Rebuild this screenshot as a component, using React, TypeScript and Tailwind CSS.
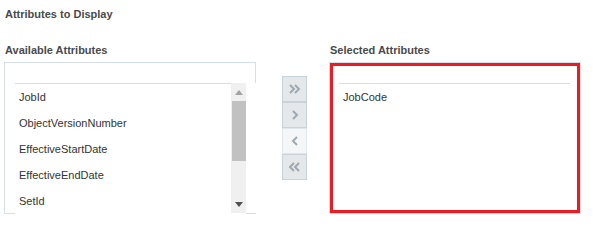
const available = [
  "JobId",
  "ObjectVersionNumber",
  "EffectiveStartDate",
  "EffectiveEndDate",
  "SetId",
];

function Chevron({ dir, double }: { dir: "left" | "right"; double?: boolean }) {
  const pts = (x: number) =>
    dir === "right" ? `${x},3 ${x + 4},7 ${x},11` : `${x + 4},3 ${x},7 ${x + 4},11`;
  return (
    <svg width="14" height="14" viewBox="0 0 14 14" fill="none" stroke="#9ea7b0" strokeWidth="1.9">
      {double ? (
        <>
          <polyline points={pts(2)} />
          <polyline points={pts(7)} />
        </>
      ) : (
        <polyline points={pts(5)} />
      )}
    </svg>
  );
}

function MoveButton({ children, light }: { children: React.ReactNode; light?: boolean }) {
  return (
    <button
      className={
        light
          ? "flex h-[26px] w-[25px] items-center justify-center border border-[#e1e6ea] bg-[#f4f6f7]"
          : "flex h-[26px] w-[25px] items-center justify-center border border-[#c9d2d9] bg-[#e4e8eb]"
      }
    >
      {children}
    </button>
  );
}

export default function App() {
  return (
    <div
      className="h-[226px] w-[600px] bg-white pt-[7px] text-[11px] text-[#333]"
      style={{ fontFamily: '"Liberation Sans", Arial, sans-serif' }}
    >
      <div className="pl-[5px] font-bold leading-[14px] text-[#4a4a4a]">Attributes to Display</div>

      <div className="mt-[22px] flex pl-[4px]">
        {/* available */}
        <div className="w-[252px]">
          <div className="pl-[1px] font-bold leading-[14px] text-[#4a4a4a]">Available Attributes</div>
          <div className="mt-[5px] flex flex-col border-t border-l border-b border-[#d6dfe6]">
            <div className="h-[20px] border-r border-[#d6dfe6]" />
            <div className="relative z-10 -mb-px ml-[10px] flex h-[131px] w-[231px] bg-white">
              <div className="flex-1 overflow-hidden border-t border-[#d6dfe6]">
                {available.map((a) => (
                  <div key={a} className="h-[26px] pl-[4px] leading-[26px]">
                    {a}
                  </div>
                ))}
              </div>
              <div className="flex h-[130px] w-[15px] flex-col items-center bg-[#f0f0f0]">
                <div className="flex h-[18px] items-center">
                  <svg width="8" height="5" viewBox="0 0 8 5">
                    <polygon points="0,5 4,0 8,5" fill="#a3a3a3" />
                  </svg>
                </div>
                <div className="ml-px h-[60px] w-[14px] bg-[#c1c1c1]" />
                <div className="flex-1" />
                <div className="flex h-[18px] items-center">
                  <svg width="8" height="5" viewBox="0 0 8 5">
                    <polygon points="0,0 8,0 4,5" fill="#505050" />
                  </svg>
                </div>
              </div>
            </div>
          </div>
        </div>

        {/* buttons */}
        <div className="ml-[26px] mt-[33px] flex flex-col">
          <MoveButton>
            <Chevron dir="right" double />
          </MoveButton>
          <MoveButton>
            <Chevron dir="right" />
          </MoveButton>
          <MoveButton light>
            <Chevron dir="left" />
          </MoveButton>
          <MoveButton>
            <Chevron dir="left" double />
          </MoveButton>
        </div>

        {/* selected */}
        <div className="ml-[22px] w-[252px]">
          <div className="pl-[1px] font-bold leading-[14px] text-[#4a4a4a]">Selected Attributes</div>
          <div className="mt-[5px] h-[152px] border border-[#d6dfe6]">
            <div className="h-full border-[3px] border-[#ec1c24] pt-[17px] pl-[6px] pr-[7px]">
              <div className="border-t border-[#d6dfe6]">
                <div className="h-[26px] pl-[4px] leading-[26px]">JobCode</div>
              </div>
            </div>
          </div>
        </div>
      </div>
    </div>
  );
}
